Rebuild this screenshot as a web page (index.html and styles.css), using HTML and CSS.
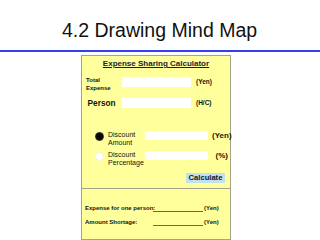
FILE: index.html
```html
<!DOCTYPE html>
<html>
<head>
<meta charset="utf-8">
<link rel="stylesheet" href="styles.css">
</head>
<body>
<div class="title">4.2 Drawing Mind Map</div>
<div class="rule"></div>
<div class="panel">
  <div class="top">
    <div class="heading">Expense Sharing Calculator</div>
    <div class="row row-total">
      <div class="label-sm">Total<br>Expense</div>
      <div class="field field-a"></div>
      <div class="unit-sm">(Yen)</div>
    </div>
    <div class="row row-person">
      <div class="label-person">Person</div>
      <div class="field field-a"></div>
      <div class="unit-sm">(H/C)</div>
    </div>
    <div class="row row-radio row-amount">
      <div class="radio radio-on"></div>
      <div class="label-radio">Discount<br>Amount</div>
      <div class="field field-b"></div>
      <div class="unit-lg">(Yen)</div>
    </div>
    <div class="row row-radio row-pct">
      <div class="radio radio-off"></div>
      <div class="label-radio">Discount<br>Percentage</div>
      <div class="field field-b"></div>
      <div class="unit-lg">(%)</div>
    </div>
    <div class="row row-button">
      <div class="button">Calculate</div>
    </div>
  </div>
  <div class="bottom">
    <div class="result">
      <div>Expense for one person:</div>
      <div class="blank"></div>
      <div class="result-unit">(Yen)</div>
    </div>
    <div class="result result-second">
      <div>Amount Shortage:</div>
      <div class="blank"></div>
      <div class="result-unit">(Yen)</div>
    </div>
  </div>
</div>
</body>
</html>
```
FILE: styles.css
```css
html, body {
  margin: 0;
  padding: 0;
  background: #ffffff;
  font-family: "Liberation Sans", Arial, sans-serif;
  color: #141414;
  overflow: hidden;
}
.title {
  height: 30px;
  padding: 20px 0 0 62px;
  font-size: 19.5px;
  line-height: 20px;
  color: #111111;
}
.rule {
  height: 2px;
  background: #3340ee;
}
.panel {
  margin: 3px 0 0 81px;
  width: 150px;
  height: 185px;
  box-sizing: border-box;
  border: 1px solid #a3a38a;
  background: #ffff9c;
}
.top {
  height: 133px;
  box-sizing: border-box;
  padding-top: 3px;
  border-bottom: 1px solid #a3a38a;
}
.heading {
  font-size: 8px;
  font-weight: bold;
  line-height: 10px;
  text-align: center;
  text-decoration: underline;
  color: #1c1c30;
}
.row {
  display: flex;
  align-items: flex-start;
}
.row-total {
  margin-top: 7px;
  padding-left: 4px;
}
.label-sm {
  width: 36px;
  font-size: 6px;
  font-weight: bold;
  line-height: 8px;
}
.field {
  background: #ffffff;
}
.field-a {
  width: 69px;
  height: 10px;
  margin-top: 1px;
}
.unit-sm {
  margin-left: 5px;
  margin-top: 1px;
  font-size: 6.5px;
  font-weight: bold;
  line-height: 10px;
}
.row-person {
  margin-top: 6px;
  padding-left: 4px;
  align-items: center;
}
.row-person .field-a {
  margin-top: 0;
}
.row-person .unit-sm {
  margin-top: 0;
}
.label-person {
  width: 36px;
  box-sizing: border-box;
  padding-left: 1.5px;
  font-size: 8.3px;
  font-weight: bold;
  line-height: 10px;
}
.row-radio {
  padding-left: 13px;
}
.row-amount {
  margin-top: 23px;
}
.row-pct {
  margin-top: 4px;
}
.radio {
  width: 9px;
  height: 9px;
  margin-top: 1px;
  border-radius: 50%;
  box-sizing: border-box;
}
.radio-on {
  background: radial-gradient(circle at 50% 50%, #000000 0, #111111 55%, #8a8a7a 80%, #f4f4d0 100%);
}
.radio-off {
  background: #ffffff;
  border: 1px solid #f2f2e4;
}
.label-radio {
  width: 37px;
  margin-left: 4px;
  font-size: 7px;
  line-height: 8px;
  white-space: nowrap;
}
.field-b {
  width: 63px;
  height: 9px;
}
.unit-lg {
  width: 16px;
  margin-left: 4px;
  text-align: right;
  font-size: 8px;
  font-weight: bold;
  line-height: 9px;
}
.row-button {
  margin-top: 6px;
  justify-content: flex-end;
  padding-right: 5px;
}
.button {
  width: 39px;
  height: 10px;
  background: #bfe2ee;
  font-size: 7.6px;
  font-weight: bold;
  line-height: 10px;
  text-align: center;
}
.bottom {
  padding: 15px 0 0 3px;
}
.result {
  display: grid;
  grid-template-columns: 68px 50px auto;
  font-size: 6px;
  font-weight: bold;
  line-height: 8px;
  white-space: nowrap;
}
.result-second {
  margin-top: 6px;
}
.blank {
  height: 7px;
  border-bottom: 1px solid #6a6a5a;
}
.result-unit {
  margin-left: 1px;
}
```
